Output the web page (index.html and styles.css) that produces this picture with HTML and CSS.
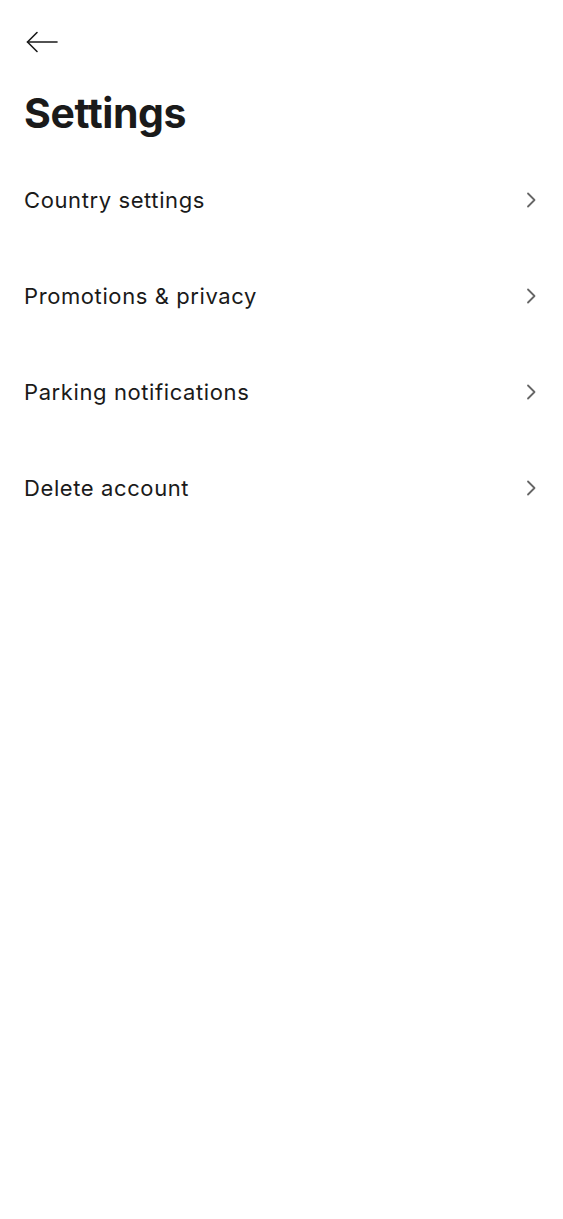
FILE: index.html
```html
<!DOCTYPE html>
<html lang="en">

<head>
  <meta charset="UTF-8" />
  <meta name="viewport" content="width=device-width, initial-scale=1.0" />
  <title>Settings</title>
  <link rel="stylesheet" href="styles.css">
</head>

<body>
  <div class="page">
    <button class="back-btn" aria-label="Back">
      <svg width="32" height="24" viewBox="0 0 32 24" fill="none" stroke="#1a1a1a" stroke-width="1.6" stroke-linecap="round" stroke-linejoin="round">
        <path d="M31 12H1.5" />
        <path d="M11 2.5L1.5 12l9.5 9.5" />
      </svg>
    </button>

    <h1 class="title">Settings</h1>

    <ul class="settings-list">
      <li class="settings-item">
        <span>Country settings</span>
        <svg class="chevron" width="24" height="24" viewBox="0 0 24 24" fill="none" stroke="#666" stroke-width="1.8" stroke-linecap="round" stroke-linejoin="round"><path d="M9 5.5l6.5 6.5L9 18.5" /></svg>
      </li>
      <li class="settings-item">
        <span>Promotions &amp; privacy</span>
        <svg class="chevron" width="24" height="24" viewBox="0 0 24 24" fill="none" stroke="#666" stroke-width="1.8" stroke-linecap="round" stroke-linejoin="round"><path d="M9 5.5l6.5 6.5L9 18.5" /></svg>
      </li>
      <li class="settings-item">
        <span>Parking notifications</span>
        <svg class="chevron" width="24" height="24" viewBox="0 0 24 24" fill="none" stroke="#666" stroke-width="1.8" stroke-linecap="round" stroke-linejoin="round"><path d="M9 5.5l6.5 6.5L9 18.5" /></svg>
      </li>
      <li class="settings-item">
        <span>Delete account</span>
        <svg class="chevron" width="24" height="24" viewBox="0 0 24 24" fill="none" stroke="#666" stroke-width="1.8" stroke-linecap="round" stroke-linejoin="round"><path d="M9 5.5l6.5 6.5L9 18.5" /></svg>
      </li>
    </ul>
  </div>
</body>

</html>
```

FILE: styles.css
```css
body {
  margin: 0;
  padding: 0;
  background-color: #fff;
  font-family: 'Inter', 'Liberation Sans', sans-serif;
  color: #1a1a1a;
}

.page {
  padding: 30px 20px 0 24px;
}

.back-btn {
  display: block;
  padding: 0;
  margin: 0 0 0 2px;
  border: none;
  background: none;
  height: 24px;
  cursor: pointer;
}

.back-btn svg {
  display: block;
}

.title {
  margin: 35px 0 15px;
  font-size: 41px;
  line-height: 48px;
  font-weight: 700;
  letter-spacing: -0.4px;
}

.settings-list {
  list-style: none;
  margin: 0;
  padding: 0;
}

.settings-item {
  display: flex;
  align-items: center;
  justify-content: space-between;
  height: 96px;
  font-size: 22px;
  font-weight: 400;
  letter-spacing: 0.6px;
  cursor: pointer;
}

.chevron {
  display: block;
  flex-shrink: 0;
}
```
